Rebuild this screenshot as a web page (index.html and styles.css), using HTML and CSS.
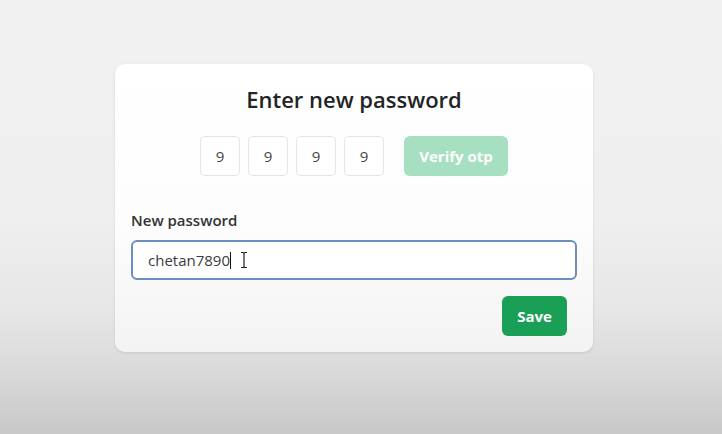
FILE: index.html
```html
<!DOCTYPE html>
<html lang="en">
<head>
<meta charset="utf-8">
<title>Enter new password</title>
<link rel="stylesheet" href="styles.css">
</head>
<body>
<div class="card">
  <h1 class="title">Enter new password</h1>
  <div class="otp-row">
    <div class="otp-box">9</div>
    <div class="otp-box">9</div>
    <div class="otp-box">9</div>
    <div class="otp-box">9</div>
    <button class="btn btn-verify">Verify otp</button>
  </div>
  <label class="label">New password</label>
  <div class="input">
    <span class="input-text">chetan7890</span><span class="caret"></span>
    <svg class="ibeam" width="8" height="18" viewBox="0 0 8 18" aria-hidden="true">
      <path d="M1 1.5 H3 Q4 1.5 4 3 V15 Q4 16.5 3 16.5 H1 M7 1.5 H5 Q4 1.5 4 3 M4 15 Q4 16.5 5 16.5 H7" fill="none" stroke="#222" stroke-width="1.2"/>
    </svg>
  </div>
  <div class="actions">
    <button class="btn btn-save">Save</button>
  </div>
</div>
</body>
</html>
```

FILE: styles.css
```css
html, body {
  margin: 0;
  padding: 0;
}
body {
  width: 722px;
  height: 434px;
  overflow: hidden;
  font-family: "Open Sans", "Noto Sans", sans-serif;
  background: linear-gradient(180deg, #f1f1f1 0%, #efefef 50%, #e6e6e6 72%, #d9d9d9 86%, #c8c8c8 100%);
}
.card {
  margin: 64px 0 0 115px;
  width: 478px;
  box-sizing: border-box;
  padding: 21px 16px 16px;
  border-radius: 10px;
  background: linear-gradient(180deg, #ffffff 0%, #fdfdfd 55%, #f3f3f3 100%);
  box-shadow: 0 1px 3px rgba(0,0,0,0.10);
  display: flex;
  flex-direction: column;
}
.title {
  margin: 0;
  text-align: center;
  font-size: 22px;
  line-height: 28px;
  font-weight: 600;
  color: #222426;
}
.otp-row {
  margin-top: 23px;
  display: flex;
  justify-content: center;
  align-items: center;
  gap: 8px;
}
.otp-box {
  width: 40px;
  height: 40px;
  box-sizing: border-box;
  border: 1px solid #e4e4e4;
  border-radius: 5px;
  background: #fff;
  display: flex;
  align-items: center;
  justify-content: center;
  font-size: 15px;
  color: #444;
}
.btn {
  height: 40px;
  border: none;
  border-radius: 6px;
  color: #fff;
  font-family: "Open Sans", "Noto Sans", sans-serif;
  font-size: 15px;
  font-weight: 700;
  padding: 0;
}
.btn-verify {
  width: 104px;
  margin-left: 12px;
  background: #a7dfc1;
}
.label {
  margin-top: 34px;
  font-size: 15px;
  line-height: 20px;
  font-weight: 600;
  color: #333;
}
.input {
  position: relative;
  margin-top: 10px;
  height: 40px;
  box-sizing: border-box;
  border: 2px solid #6a8ec0;
  border-radius: 6px;
  background: #fff;
  padding-left: 15px;
  display: flex;
  align-items: center;
  font-size: 15px;
  color: #3c3c3c;
}
.caret {
  display: inline-block;
  width: 1px;
  height: 17px;
  background: #111;
}
.ibeam {
  position: absolute;
  left: 107px;
  top: 9px;
}
.actions {
  margin-top: 16px;
  display: flex;
  justify-content: flex-end;
  padding-right: 10px;
}
.btn-save {
  width: 65px;
  background: #1a9f56;
}
```
